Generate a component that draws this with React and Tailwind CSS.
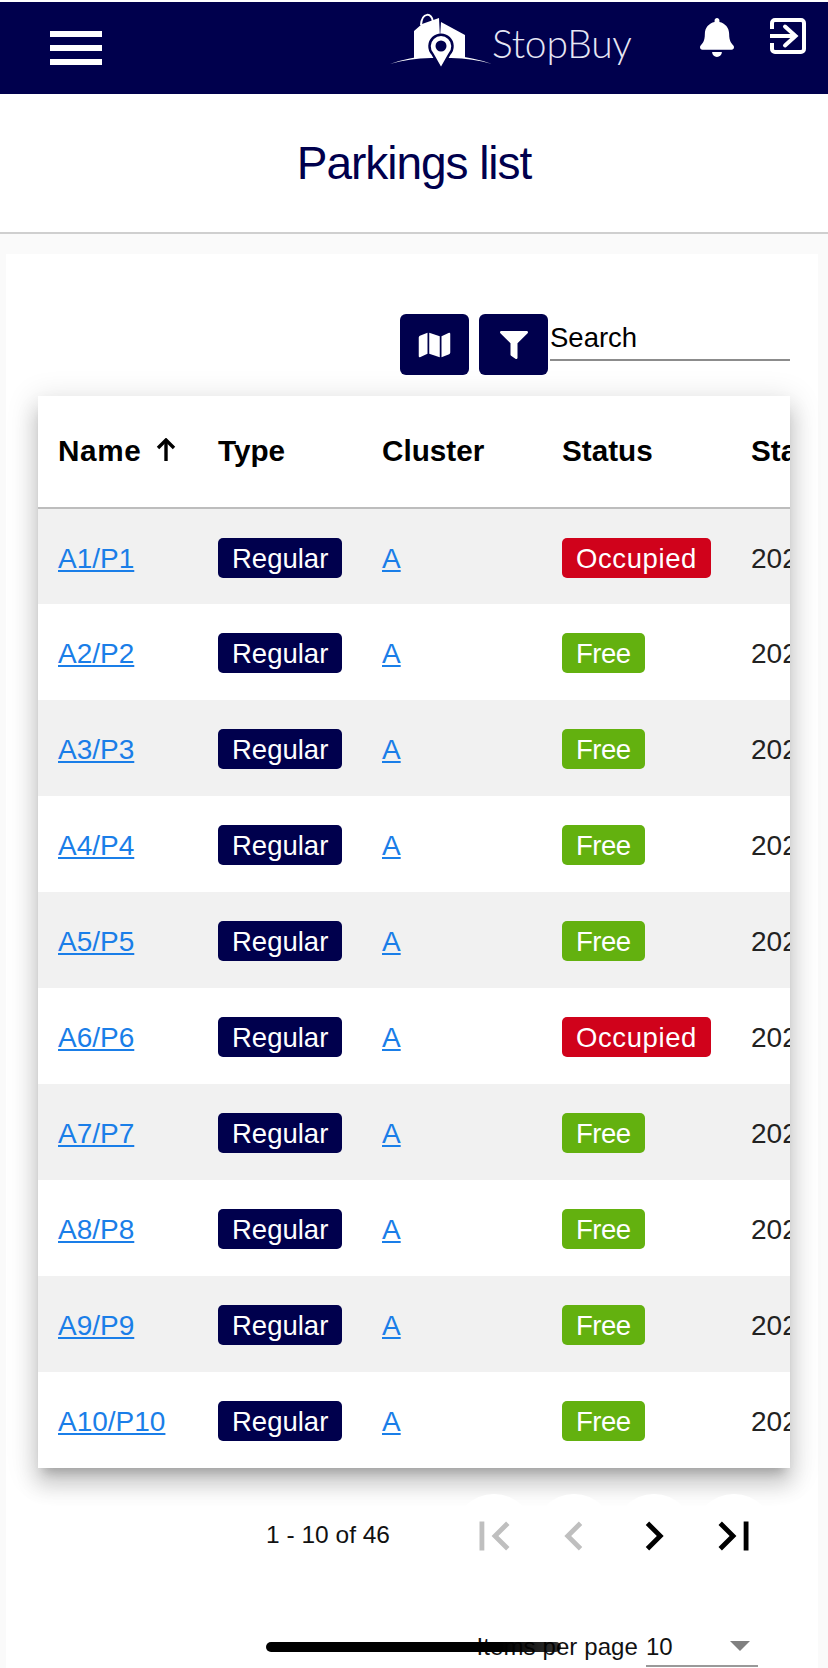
import { FaBell, FaFilter, FaMap } from "react-icons/fa";
import { MdChevronLeft, MdChevronRight, MdFirstPage, MdLastPage } from "react-icons/md";

const NAVY = "#00004d";

const ROWS = [
  { name: "A1/P1", status: "Occupied" },
  { name: "A2/P2", status: "Free" },
  { name: "A3/P3", status: "Free" },
  { name: "A4/P4", status: "Free" },
  { name: "A5/P5", status: "Free" },
  { name: "A6/P6", status: "Occupied" },
  { name: "A7/P7", status: "Free" },
  { name: "A8/P8", status: "Free" },
  { name: "A9/P9", status: "Free" },
  { name: "A10/P10", status: "Free" },
];

const BADGE_STYLES = {
  Regular: "bg-[#00004d]",
  Occupied: "bg-[#d0021b] tracking-[0.6px]",
  Free: "bg-[#63b10f] tracking-[-0.5px]",
};

function Logo() {
  return (
    <svg width="120" height="70" viewBox="0 0 120 70" className="shrink-0">
      <path d="M36 17 C37 4 47 4 48 14" fill="none" stroke="#fff" strokeWidth="2" />
      <path d="M29 23 L37 16 L54 10 L55 30 L56 14 L80 27 L80 50 L29 50 Z" fill="#fff" />
      <path d="M5 56 Q 24 49 46 47.5 L 46 50 Q 24 50.5 5 56 Z" fill="#fff" />
      <path d="M107 56 Q 88 49 66 47.5 L 66 50 Q 88 50.5 107 56 Z" fill="#fff" />
      <path
        d="M56 61 L47.5 46 A 11.5 11.5 0 1 1 64.5 46 Z"
        fill="#fff"
        stroke={NAVY}
        strokeWidth="2.5"
        strokeLinejoin="round"
      />
      <circle cx="56" cy="38" r="5.5" fill={NAVY} />
    </svg>
  );
}

function LogoutIcon() {
  return (
    <svg width="36" height="36" viewBox="0 0 36 36" fill="none" stroke="#fff" strokeWidth="4" className="shrink-0">
      <path d="M2 11V5a3 3 0 0 1 3-3h26a3 3 0 0 1 3 3v26a3 3 0 0 1-3 3H5a3 3 0 0 1-3-3v-6" />
      <path d="M0 18H25" />
      <path d="M15 8.5L25.5 18L15 27.5" strokeLinecap="round" />
    </svg>
  );
}

function Header() {
  return (
    <div className="pt-[2px]">
      <div className="h-[92px] bg-[#00004d] flex items-start text-white">
        <div className="ml-[50px] mt-[29px] w-[52px] flex flex-col gap-[8px]">
          <div className="h-[6px] bg-white" />
          <div className="h-[6px] bg-white" />
          <div className="h-[6px] bg-white" />
        </div>
        <div className="ml-[283px] mt-[6px]">
          <Logo />
        </div>
        <div className="-ml-[13px] mt-[19px] w-[150px] text-[39px] leading-[44px] font-light tracking-[-0.2px] text-[#e6e6f4] font-['Lato',sans-serif]">
          StopBuy
        </div>
        <FaBell className="ml-[58px] mt-[16px] w-[34px] h-[39px] shrink-0" />
        <div className="ml-[36px] mt-[16px]">
          <LogoutIcon />
        </div>
      </div>
    </div>
  );
}

function Badge({ label }) {
  return (
    <span className={`inline-block h-[40px] leading-[41px] px-[14px] rounded-[5px] text-white text-[27.5px] ${BADGE_STYLES[label]}`}>
      {label}
    </span>
  );
}

function SortArrow() {
  return (
    <svg width="20" height="23" viewBox="0 0 20 23" fill="none" stroke="#000" strokeWidth="3.4" className="ml-[15px] -mt-[3px] shrink-0">
      <path d="M10 2V23" />
      <path d="M2 10L10 2L18 10" />
    </svg>
  );
}

function ParkingTable() {
  return (
    <div className="bg-white overflow-hidden shadow-[0_10px_10px_-6px_rgba(0,0,0,0.2),0_16px_20px_2px_rgba(0,0,0,0.14),0_6px_28px_4px_rgba(0,0,0,0.12)]">
      <table className="w-[893px] table-fixed border-collapse">
        <thead>
          <tr className="h-[112px] border-b-2 border-[#bdbdbd] text-[29.7px] font-bold text-black text-left">
            <th className="w-[160px] pl-5">
              <span className="flex items-center">
                <span className="tracking-[0.6px]">Name</span>
                <SortArrow />
              </span>
            </th>
            <th className="w-[164px] pl-5">Type</th>
            <th className="w-[180px] pl-5">Cluster</th>
            <th className="w-[189px] pl-5">Status</th>
            <th className="w-[200px] pl-5">Start date</th>
          </tr>
        </thead>
        <tbody>
          {ROWS.map((row, i) => (
            <tr key={row.name} className={`h-[96px] text-[28px] ${i % 2 === 0 ? "bg-[#f1f1f1]" : "bg-white"}`}>
              <td className="pl-5 pt-[4px]">
                <a href="#" className="text-[#1a7ee8] underline">
                  {row.name}
                </a>
              </td>
              <td className="pl-5 pt-[4px]">
                <Badge label="Regular" />
              </td>
              <td className="pl-5 pt-[4px]">
                <a href="#" className="text-[#1a7ee8] underline">
                  A
                </a>
              </td>
              <td className="pl-5 pt-[4px]">
                <Badge label={row.status} />
              </td>
              <td className="pl-5 pt-[4px] text-[#222] whitespace-nowrap">2021-03-12</td>
            </tr>
          ))}
        </tbody>
      </table>
    </div>
  );
}

function PageButton({ Icon, disabled }) {
  return (
    <button className="relative w-[80px] h-[80px] rounded-full bg-white flex items-center justify-center">
      <Icon className={`mt-[3px] w-[58px] h-[58px] ${disabled ? "text-[#bfbfbf]" : "text-black"}`} />
    </button>
  );
}

function Paginator() {
  return (
    <div className="mt-[26px] text-[24px] text-[#111]">
      <div className="pr-[16px] flex items-center justify-end">
        <span className="mr-[64px] mt-[3px] relative text-[24.5px]">1 - 10 of 46</span>
        <PageButton Icon={MdFirstPage} disabled />
        <PageButton Icon={MdChevronLeft} disabled />
        <PageButton Icon={MdChevronRight} />
        <PageButton Icon={MdLastPage} />
      </div>
      <div className="mt-[45px] pr-[32px] flex items-start justify-end">
        <span className="mr-[8px] leading-[56px] tracking-[0.1px]">Items per page</span>
        <div className="w-[112px] h-[48px] border-b-2 border-[#999] flex items-start justify-between pr-[8px] leading-[56px]">
          <span>10</span>
          <svg width="20" height="10" viewBox="0 0 20 10" className="mt-[22px] shrink-0">
            <path d="M0 0H20L10 10Z" fill="#808080" />
          </svg>
        </div>
      </div>
    </div>
  );
}

export default function App() {
  return (
    <div className="relative h-[1668px] overflow-hidden bg-white font-['Liberation_Sans',Arial,sans-serif]">
      <Header />
      <div className="h-[140px] border-b-2 border-[#cfcfcf] flex items-center justify-center">
        <h1 className="text-[46px] tracking-[-1.05px] text-[#00004d]">Parkings list</h1>
      </div>
      <div className="bg-[#fafafa] pt-[20px] pl-[6px] pr-[10px]">
        <div className="bg-white pt-[60px] pl-[32px] pr-[28px] h-[1420px]">
          <div className="flex justify-end items-start mb-[21px]">
            <button className="w-[69px] h-[61px] rounded-[6px] bg-[#00004d] flex items-center justify-center text-white">
              <FaMap className="w-[33px] h-[28px]" />
            </button>
            <button className="ml-[10px] w-[69px] h-[61px] rounded-[6px] bg-[#00004d] flex items-center justify-center text-white">
              <FaFilter className="w-[28px] h-[28px]" />
            </button>
            <div className="ml-[2px] w-[240px] h-[47px] border-b-2 border-[#8c8c8c] text-[27.5px] leading-[48px] text-black">
              Search
            </div>
          </div>
          <ParkingTable />
          <Paginator />
        </div>
      </div>
      <div className="absolute left-[266px] top-[1642px] w-[295px] h-[10px] rounded-full bg-gradient-to-r from-black from-80% to-black/80" />
    </div>
  );
}
